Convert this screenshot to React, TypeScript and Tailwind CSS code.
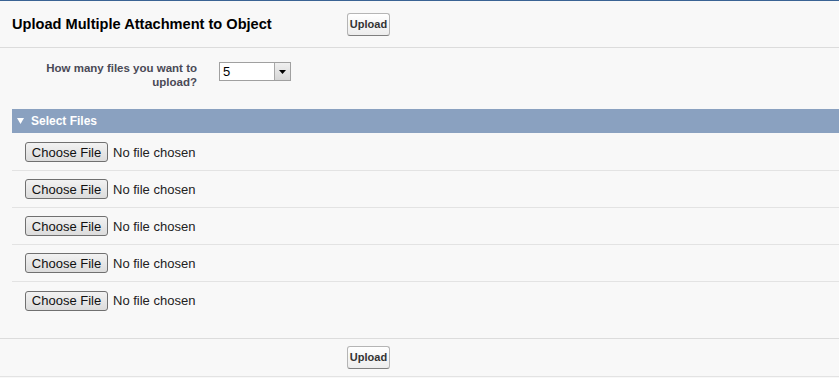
import React from "react";

const font = { fontFamily: '"Liberation Sans", Arial, sans-serif' };

function UploadBtn() {
  return (
    <button className="h-[23px] w-[43px] rounded-[3px] border border-[#b5b5b5] border-b-[#7f7f7f] bg-gradient-to-b from-white to-[#ededed] text-[11px] font-bold text-[#333] leading-none">
      Upload
    </button>
  );
}

function FileRow({ last }: { last?: boolean }) {
  return (
    <div className={"ml-[12px] h-[37px] flex items-center pl-[13px] " + (last ? "" : "border-b border-[#e3e3e3]")}>
      <span className="h-[20px] w-[83px] flex items-center justify-center rounded-[3px] border border-[#707070] bg-gradient-to-b from-[#f2f2f2] to-[#dcdcdc] text-[13px] text-[#111] leading-none">
        Choose File
      </span>
      <span className="ml-[5px] text-[13px] text-[#222] leading-none">No file chosen</span>
    </div>
  );
}

export default function App() {
  return (
    <div style={font} className="w-[839px] h-[378px] bg-[#f8f8f8] overflow-hidden">
      <div className="h-[1px] bg-[#3a6394]" />
      <div className="h-[47px] flex items-center border-b border-[#dcdcdc]">
        <div className="w-[347px] pl-[12px] text-[14.6px] font-bold text-[#000] leading-none">
          Upload Multiple Attachment to Object
        </div>
        <UploadBtn />
      </div>
      <div className="h-[61px] flex items-start pt-[13px]">
        <div className="w-[197px] text-right text-[11.5px] font-bold text-[#4a4a56] leading-[14px]">
          How many files you want to
          <br />
          upload?
        </div>
        <div className="ml-[22px] mt-[1px] h-[19px] w-[72px] flex border border-[#a0a0a0] bg-white">
          <span className="flex-1 pl-[3px] text-[13px] leading-[17px] text-[#000]">5</span>
          <span className="w-[16px] h-[17px] flex items-center justify-center border-l border-[#a8a8a8] bg-gradient-to-b from-[#f0f0f0] to-[#d6d6d6]">
            <svg width="7" height="4" viewBox="0 0 7 4">
              <path d="M0 0H7L3.5 4Z" fill="#000" />
            </svg>
          </span>
        </div>
      </div>
      <div className="ml-[12px] h-[24px] bg-[#8aa1c0] flex items-center">
        <svg className="ml-[5px]" width="7" height="6" viewBox="0 0 7 6">
          <path d="M0 0H7L3.5 6Z" fill="#fff" />
        </svg>
        <span className="ml-[7px] text-[12px] font-bold text-white leading-none">Select Files</span>
      </div>
      <div className="pt-[1px]">
        <FileRow />
        <FileRow />
        <FileRow />
        <FileRow />
        <FileRow last />
      </div>
      <div className="h-[20px] border-b border-[#dcdcdc]" />
      <div className="h-[38px] flex items-center border-b border-[#e3e3e3]">
        <div className="w-[347px]" />
        <UploadBtn />
      </div>
    </div>
  );
}
